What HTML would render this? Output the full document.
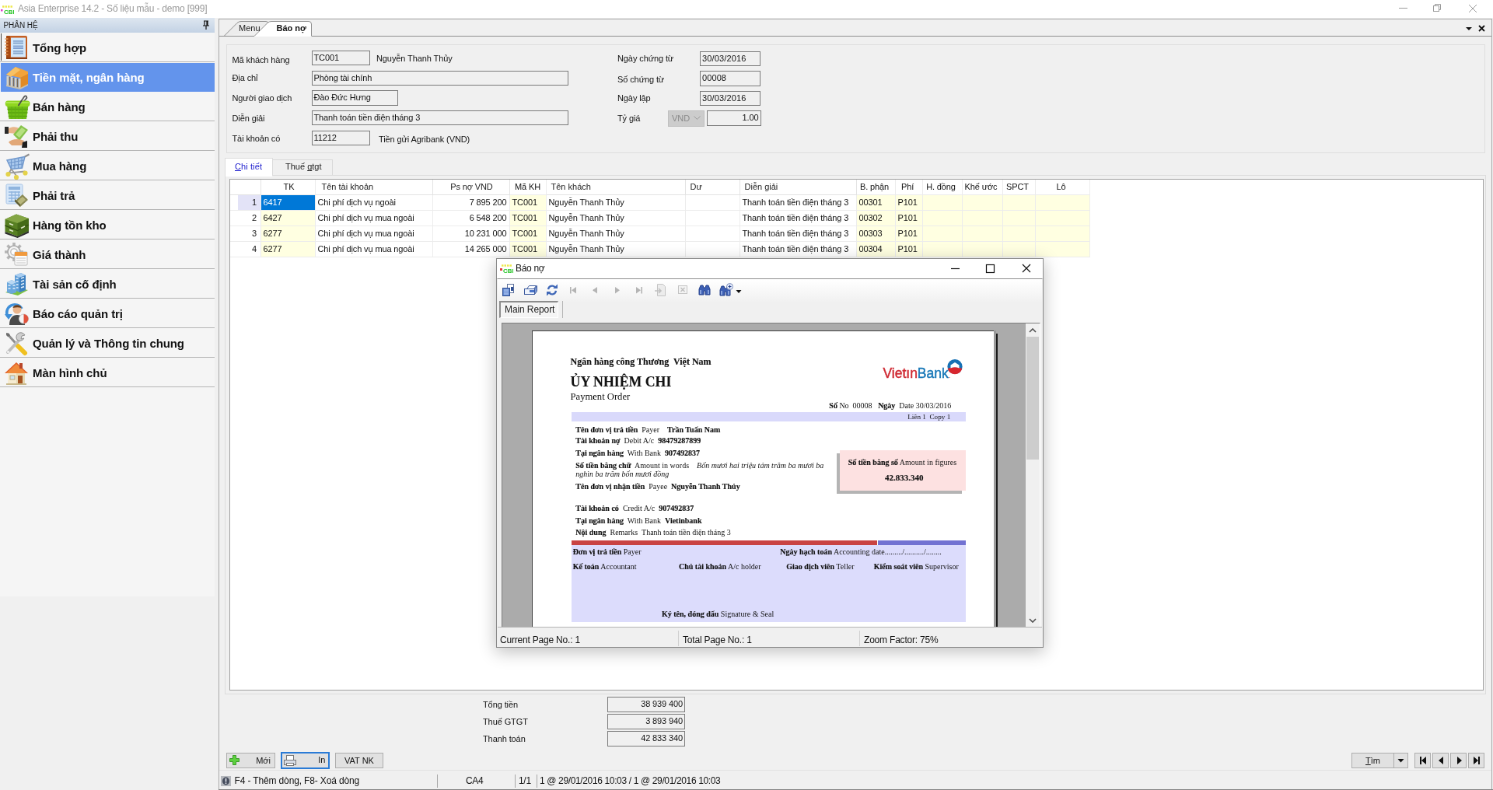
<!DOCTYPE html>
<html lang="vi">
<head>
<meta charset="utf-8">
<title>Asia Enterprise 14.2 - Số liệu mẫu - demo [999]</title>
<style>
html,body{margin:0;padding:0;background:#f0f0f0;overflow:hidden;}
body{width:1493px;height:790px;position:relative;font-family:"Liberation Sans",sans-serif;}
#root{position:absolute;left:0;top:0;width:1920px;height:1016px;transform:scale(0.777604);transform-origin:0 0;will-change:transform;background:#f0f0f0;font-size:11px;color:#000;overflow:hidden;}
#root *{box-sizing:border-box;}
.abs{position:absolute;}
u{text-decoration-skip-ink:none;}
.t{position:absolute;white-space:nowrap;}
/* ---------- title bar ---------- */
#titlebar{position:absolute;left:0;top:0;width:1920px;height:23px;background:#fff;}
#titlebar .ttl{position:absolute;left:23px;top:0;line-height:23.500px;font-size:12px;color:#999;white-space:nowrap;letter-spacing:-0.2px;}
/* ---------- sidebar ---------- */
#side{position:absolute;left:0;top:23px;width:276px;height:993px;background:#f0f0f0;}
#sidehead{position:absolute;left:0;top:0;width:276px;height:19px;background:linear-gradient(#dde6f0,#c3d2e4);}
#sidehead span{position:absolute;left:4.500px;top:0;line-height:19px;font-size:10px;color:#1e1e1e;letter-spacing:-0.05px;}
#sidelist{position:absolute;left:0;top:19px;width:276px;height:725px;background:#f5f5f5;}
.mi{position:absolute;left:0;width:276px;height:38px;border-bottom:1px solid #b4b4b4;background:#f5f5f5;}
.mi span{position:absolute;left:42px;top:0;line-height:40px;font-size:15px;letter-spacing:-0.1px;font-weight:bold;color:#111;white-space:nowrap;}
.mi.sel{background:#6394ec;border-bottom:none;left:1px;width:275px;height:36.500px;margin-top:1px;}
.mi.sel span{line-height:38px;}
.mi.sel svg{top:2px;}
.mi.sel span{color:#fff;left:41px;}
.mi svg{position:absolute;left:4.500px;top:3px;width:32px;height:32px;overflow:visible;}

/* ---------- main panel ---------- */
#main{position:absolute;left:281px;top:24px;width:1638px;height:992px;border:1px solid #a9a9a9;border-bottom:none;background:#f0f0f0;}
#tabline{position:absolute;left:0;top:21px;width:1634px;height:1px;background:#8e8e8e;}
.lbl{position:absolute;white-space:nowrap;font-size:11px;line-height:20px;color:#111;letter-spacing:-0.1px;}
.inp{position:absolute;height:19.500px;border:1px solid #7a7a7a;background:#f0f0f0;font-size:11px;line-height:17.500px;letter-spacing:-0.12px;padding:0 2px;white-space:nowrap;color:#111;overflow:hidden;}
.inp.r{text-align:right;}
#gbox{position:absolute;left:8.500px;top:32px;width:1619px;height:139.500px;border:1px solid #dedede;}
/* grid */
#grid{position:absolute;left:12.500px;top:204.500px;width:1613px;height:658.500px;background:#fff;border:1px solid #a0a0a0;}
#grid .h{position:absolute;top:0;height:20px;line-height:18px;font-size:11px;color:#222;background:#fff;border-right:1px solid #e3e3e3;border-bottom:1px solid #e3e3e3;white-space:nowrap;padding-left:6px;}
#grid .h.c{text-align:center;padding-left:0;}
#grid .c{position:absolute;height:20px;line-height:19px;font-size:11px;letter-spacing:-0.12px;color:#111;white-space:nowrap;padding:0 3px;border-right:1px solid #ececec;border-bottom:1px solid #ececec;overflow:hidden;}
#grid .y{background:#ffffe1;}
#grid .n{text-align:right;}
#grid .c.n:first-child,#grid .rn{padding-right:4.500px;}
.btn{position:absolute;height:20px;border:1px solid #adadad;background:#e1e1e1;font-size:11px;line-height:18px;text-align:center;color:#111;white-space:nowrap;}
#status{position:absolute;left:282px;top:990px;width:1636px;height:24px;background:#f0f0f0;border-top:1px solid #e2e2e2;font-size:12px;}
#status .t{line-height:27.500px;top:0;color:#111;}
#status .sep{position:absolute;top:5px;width:1px;height:17px;background:#a8a8a8;}

/* ---------- dialog ---------- */
#dlg{position:absolute;left:638px;top:332px;width:704px;height:500.500px;background:#fff;border:1px solid #8a8a8a;box-shadow:0 5px 20px 1px rgba(0,0,0,0.24);}
#dlg .cap{position:absolute;left:24px;top:0;line-height:25px;font-size:12px;color:#111;white-space:nowrap;letter-spacing:-0.3px;}
#dcl{position:absolute;left:0;top:25px;width:702px;height:473.500px;background:#f0f0f0;border:1px solid transparent;border-top-color:#8f8f8f;overflow:hidden;}
#dtool{position:absolute;left:0;top:0;width:700px;height:30px;background:linear-gradient(#ffffff,#f0f0f0);}
#dtab{position:absolute;left:2px;top:27.500px;width:76px;height:22px;letter-spacing:-0.1px;border-top:2px solid #8c8c8c;border-left:2px solid #8c8c8c;border-right:1px solid #fff;border-bottom:1px solid #fff;background:#f4f4f4;font-size:12px;line-height:19px;color:#222;padding-left:5px;white-space:nowrap;}
#dview{position:absolute;left:5px;top:56px;width:674px;height:391px;background:#ababab;border-top:1px solid #7e7e7e;border-left:1px solid #7e7e7e;overflow:hidden;}
#pgap{position:absolute;left:632.300px;top:9px;width:2.300px;height:842px;background:#9a9a9a;}
#pshadow{position:absolute;left:634.600px;top:12.700px;width:2.900px;height:842px;background:#1a1a1a;}
#page{position:absolute;left:38.300px;color:#000;top:9px;width:594px;height:842px;background:#fff;border-left:1px solid #3d3d3d;border-top:1px solid #3d3d3d;font-family:"Liberation Serif",serif;font-size:10px;color:#111;}
#page .t{line-height:12px;}
#page b{font-weight:bold;-webkit-text-stroke:0.15px #111;}
#dscroll{position:absolute;left:679px;top:56px;width:19px;height:391px;background:#f0f0f0;border-top:1px solid #7e7e7e;border-right:1px solid #fff;}
#dstat{position:absolute;left:0;top:447px;width:700px;height:25.500px;border-top:1px solid #b4b4b4;background:#f0f0f0;font-size:12px;color:#111;}
#dstat .t{top:3.500px;line-height:25px;letter-spacing:-0.2px;}
#dstat .sep{position:absolute;top:4px;width:1px;height:20px;background:#d0d0d0;}
</style>
</head>
<body>
<div id="root">

<!-- ================= TITLE BAR ================= -->
<div id="titlebar">
  <svg class="abs" style="left:-0.500px;top:4.500px" width="18" height="16" viewBox="0 0 18 16"><path d="M3 3.500h13" stroke="#efe94f" stroke-width="2.500" stroke-dasharray="2.500 1"/><rect x="1" y="7" width="2.500" height="2.500" fill="#e23ad0"/><text x="5" y="13" font-family="Liberation Sans, sans-serif" font-size="8" font-weight="bold" fill="#22c322">CBF</text></svg>
  <div class="ttl">Asia Enterprise 14.2 - Số liệu mẫu - demo [999]</div>
  <svg class="abs" style="left:1780px;top:0" width="140" height="23" viewBox="0 0 140 23"><g stroke="#9a9a9a" stroke-width="1" fill="none"><path d="M19 10.500h11"/><rect x="63.500" y="7.500" width="7" height="7"/><path d="M65.500 7.500v-2h7v7h-2"/><path d="M109 6l10 10M119 6l-10 10"/></g></svg>
</div>

<!-- ================= SIDEBAR ================= -->
<div id="side">
  <div id="sidehead"><span>PHÂN HỆ</span>
    <svg class="abs" style="left:260px;top:3px" width="10" height="13" viewBox="0 0 10 13"><path d="M2 1h6M3 1v6M7 1v6M6 1v6M1 7h8M5 7v5" stroke="#111" stroke-width="1.200" fill="none"/></svg>
  </div>
  <div id="sidelist">
    <div class="mi" style="top:0"><div class="abs" style="left:1px;top:1px;width:1px;height:35px;background:#444"></div><svg viewBox="0 0 32 32"><rect x="3" y="1" width="27" height="30" rx="2" fill="#c55f22"/><rect x="3" y="1" width="5" height="30" rx="1" fill="#a94a12"/><rect x="9" y="3.500" width="19" height="25" fill="#d3e9fb"/><rect x="12" y="7" width="13" height="4.500" fill="#86a6cc"/><rect x="12" y="13.500" width="13" height="4.500" fill="#7f9fd0"/><rect x="12" y="20" width="13" height="4.500" fill="#86a6cc"/><path d="M12 9.200h13M12 15.700h13M12 22.200h13" stroke="#c4dcf4" stroke-width="1"/><path d="M1.500 5h4M1.500 9h4M1.500 13h4M1.500 17h4M1.500 21h4M1.500 25h4" stroke="#e09456" stroke-width="1.400"/><rect x="3" y="29" width="27" height="2" fill="#8a3f16"/></svg><span>Tổng hợp</span></div>
    <div class="mi sel" style="top:38px"><svg viewBox="0 0 32 32"><path d="M2 13 L14 3 L30 9 L30 13 L20 17 L2 13Z" fill="#f2a33a"/><path d="M2 13 L14 3 L20 7 L8 16Z" fill="#f7c165"/><path d="M20 17 L30 12 L30 26 L20 31Z" fill="#e08a24"/><path d="M4 15v13M9 16v13M14 17v13M19 18v13" stroke="#d9d3c3" stroke-width="3"/><path d="M6.500 16v12M11.500 17v12M16.500 18v12" stroke="#7a6a55" stroke-width="1.600"/><path d="M2 28l18 4 10-5v-2l-10 5-18-4z" fill="#c9c2ae"/></svg><span>Tiền mặt, ngân hàng</span></div>
    <div class="mi" style="top:76px"><svg viewBox="0 0 32 32"><path d="M18.500 15 L26 3.500 Q27.500 1.500 29 3 Q30 4.500 28.500 6 L21 15" stroke="#5a5a5a" stroke-width="1.800" fill="none"/><path d="M4 14 h27.500 l-2.500 18 h-22.500z" fill="#6fbd17"/><rect x="1.800" y="8.500" width="31.700" height="7.500" rx="3.500" fill="#8fd620"/><path d="M3 11h29" stroke="#b4ea5a" stroke-width="1.600"/><path d="M4.500 19.500h26.500M5 24h25.500M5.800 28.500h24" stroke="#5aa30f" stroke-width="1.500"/><path d="M10 16v16M14.500 16v16M19 16v16M23.500 16v16" stroke="#62ad12" stroke-width="1"/><path d="M18.500 15 L23 8" stroke="#4a4a4a" stroke-width="1.800" fill="none"/></svg><span>Bán hàng</span></div>
    <div class="mi" style="top:114px"><svg viewBox="0 0 32 32"><path d="M1 4h5v9h-5z" fill="#2a2a2a"/><path d="M6 6c6-3 11-2 15 1l-4 6-11-1z" fill="#e8b58a"/><path d="M12 14 L22 2 L31 8 L20 22Z" fill="#86c24a"/><path d="M15 14 L23 5 L28 8.500 L20 18Z" fill="#b5e080"/><path d="M6 24c4-5 14-5 20-2l-3 6H10z" fill="#e2a878"/><path d="M24 24l6-2v9h-7z" fill="#1f1f1f"/></svg><span>Phải thu</span></div>
    <div class="mi" style="top:152px"><svg viewBox="0 0 32 32"><path d="M4 9 L27 4.500 L23.500 19 L9.500 20.500Z" fill="#a9c8ec" stroke="#6f97cc" stroke-width="1.400"/><path d="M5.500 12.700l20.500-3.700M7 16.500l18-2.800M9.500 8v12.500M14 7.200v13M18.500 6.300v13.200M23 5.400v13.800" stroke="#6f97cc" stroke-width="1.100" fill="none"/><path d="M27 4.500 L32.500 1.500" stroke="#8d8d8d" stroke-width="2" fill="none"/><path d="M9.500 20.500 L6.500 25.500 L27 23.500 M9.500 20.500 L16 29" stroke="#9a9a9a" stroke-width="1.800" fill="none"/><circle cx="5.500" cy="27" r="3.100" fill="#e4d24a"/><circle cx="16" cy="31" r="3.100" fill="#e4d24a"/><circle cx="27.500" cy="25.500" r="3.100" fill="#e4d24a"/></svg><span>Mua hàng</span></div>
    <div class="mi" style="top:190px"><svg viewBox="0 0 32 32"><rect x="3" y="2" width="21" height="25" rx="1.500" fill="#d5e6f8" stroke="#a9c4e4"/><rect x="6" y="5" width="15" height="4" fill="#8fb4de"/><path d="M6 12h15M6 16h15M6 20h15M6 24h15M10 11v14M14.500 11v14M19 11v14" stroke="#8fb4de" stroke-width="1.300"/><path d="M14 24 L24 15 L31 22 L21 31Z" fill="#8b8a55"/><path d="M17 24 L24 18 L28 22 L21 28Z" fill="#b9b77d"/><path d="M14 24l7 7v-3l-7-7z" fill="#5e5d36"/></svg><span>Phải trả</span></div>
    <div class="mi" style="top:228px"><svg viewBox="0 0 32 32"><path d="M1.500 9 L16 2.500 L32 8 L32 24 L17.500 31 L1.500 25Z" fill="#577f22"/><path d="M1.500 9 L16 2.500 L32 8 L17.500 14Z" fill="#83a544"/><path d="M17.500 14 L32 8 L32 24 L17.500 31Z" fill="#456a18"/><path d="M1.500 17l16 6.500 14.500-7.500" stroke="#34520f" stroke-width="1.400" fill="none"/><path d="M7 14.500l5 2M7 22.500l5 2M22 20.500l5-2.500" stroke="#dfe8c8" stroke-width="1.800"/><path d="M1.500 25l16 6 14.500-7v2.500l-14.500 6.500-16-5.500z" fill="#2c2c2c"/></svg><span>Hàng tồn kho</span></div>
    <div class="mi" style="top:266px"><svg viewBox="0 0 32 32"><path d="M13 1v5M13 20v5M1 13h5M20 13h5M4.500 4.500l3.500 3.500M18 18l3.500 3.500M21.500 4.500L18 8M8 18l-3.500 3.500" stroke="#b5b5b5" stroke-width="3.600"/><circle cx="13" cy="13" r="8" fill="#f4f4f4" stroke="#a9a9a9" stroke-width="1.600"/><circle cx="13" cy="13" r="4.200" fill="#fdfdfd" stroke="#b9b9b9" stroke-width="1.300"/><rect x="14" y="13" width="16" height="17" rx="1" fill="#fdfdfd" stroke="#b9b9b9"/><rect x="14" y="13" width="16" height="5" fill="#f09a3e"/><path d="M16 21h12M16 24h12M16 27h12" stroke="#c4c4c4" stroke-width="1.200"/></svg><span>Giá thành</span></div>
    <div class="mi" style="top:304px"><svg viewBox="0 0 32 32"><path d="M2 27 L18 31 L31 24 L16 21Z" fill="#7cc142"/><path d="M14 5 L22 2 L28 5 L28 24 L20 27 L14 24Z" fill="#5b9bd5"/><path d="M14 5 L22 2 L28 5 L20 8Z" fill="#a8cdf0"/><path d="M20 8v19l8-3V5z" fill="#3b7fc0"/><path d="M15.500 9h3M15.500 13h3M15.500 17h3M15.500 21h3M22 9l4-1.500M22 13l4-1.500M22 17l4-1.500M22 21l4-1.500" stroke="#e3f0fb" stroke-width="1.600"/><path d="M4 14 L10 11 L16 14 L16 27 L10 29 L4 27Z" fill="#6aa7dc"/><path d="M4 14l6-3 6 3-6 3z" fill="#b9d8f3"/><path d="M5.500 18h3M5.500 22h3M11.500 18h3M11.500 22h3" stroke="#e3f0fb" stroke-width="1.600"/></svg><span>Tài sản cố định</span></div>
    <div class="mi" style="top:342px"><svg viewBox="0 0 32 32"><path d="M5 20 A10 10 0 1 1 23 10" stroke="#3f8fd8" stroke-width="3.500" fill="none"/><path d="M1 17l5 7 5-7z" fill="#3f8fd8"/><circle cx="17" cy="11" r="5.500" fill="#e9b48c"/><path d="M11.500 9c1-5 10-5 11 0c-3-1-7-1-11 0z" fill="#6a3d1c"/><path d="M7 31c0-9 4-13 10-13s10 4 10 13z" fill="#4a4a4a"/><circle cx="25.500" cy="23" r="6" fill="#f4f4f4" stroke="#c9c9c9"/><path d="M25.500 23V17a6 6 0 0 1 0 12z" fill="#e0523c"/></svg><span>Báo cáo quản trị</span></div>
    <div class="mi" style="top:380px"><svg viewBox="0 0 32 32"><path d="M4 4 L22 24" stroke="#8d8d8d" stroke-width="3"/><path d="M3 3l4 1 1 3-3 1-2-2z" fill="#6f6f6f"/><path d="M18 20 L27 29" stroke="#f0c020" stroke-width="6" stroke-linecap="round"/><path d="M5 28 L20 12" stroke="#bdbdbd" stroke-width="4" stroke-linecap="round"/><path d="M18 4a6 6 0 0 1 9 2l-4 1-1 4 4-1a6 6 0 0 1-9 2a6 6 0 0 1 1-8z" fill="#cfcfcf" stroke="#8f8f8f"/><circle cx="5.500" cy="27.500" r="1.600" fill="#f4f4f4"/></svg><span>Quản lý và Thông tin chung</span></div>
    <div class="mi" style="top:418px"><svg viewBox="0 0 32 32"><path d="M1 17 L16 3 L31 17 L27 17 L16 8 L5 17Z" fill="#e0602a"/><path d="M3 17 L16 5 L29 17Z" fill="#f08a3a"/><rect x="20" y="4" width="4" height="7" fill="#b9472a"/><path d="M5 17h22v13H5z" fill="#f6ecd2"/><path d="M16 17h11v13H16z" fill="#e6d8b2"/><rect x="18" y="20" width="6" height="10" fill="#a5521f"/><rect x="8" y="20" width="6" height="5" fill="#cfe4f2" stroke="#b9a77a"/><path d="M3 30h26v2H3z" fill="#c9b98c"/></svg><span>Màn hình chủ</span></div>
  </div>
</div>

<!-- MAIN -->
<div id="main">
  <!-- top tabs -->
  <svg class="abs" style="left:0;top:0" width="130" height="23" viewBox="0 0 130 23">
    <path d="M6 21.500 L23 4.500 Q25 2.500 28 2.500 L60 2.500 Q63 2.500 63 5.500 L63 12" fill="#ececec" stroke="#8e8e8e" stroke-width="1"/>
    <path d="M45 21.500 L62 4.500 Q64 2.500 67 2.500 L115 2.500 Q118.500 2.500 118.500 6 L118.500 22 L45 22 Z" fill="#fff" stroke="none"/>
    <path d="M45 21.500 L62 4.500 Q64 2.500 67 2.500 L115 2.500 Q118.500 2.500 118.500 6 L118.500 21.500" fill="none" stroke="#8e8e8e" stroke-width="1"/>
  </svg>
  <div class="abs" style="left:0;top:21px;width:45px;height:1px;background:#8e8e8e"></div>
  <div class="abs" style="left:118.500px;top:21px;width:1517px;height:1px;background:#8e8e8e"></div>
  <div class="t" style="left:25px;top:2px;line-height:18px;font-size:11px;color:#222">Menu</div>
  <div class="t" style="left:73.500px;top:2px;line-height:18px;font-size:11px;font-weight:bold;color:#111">Báo nợ</div>
  <svg class="abs" style="left:1601px;top:5px" width="32" height="14" viewBox="0 0 32 14"><path d="M2 5h8l-4 4z" fill="#111"/><path d="M19 3l7 7M26 3l-7 7" stroke="#111" stroke-width="1.800" fill="none"/></svg>

  <!-- group box with header fields -->
  <div id="gbox"></div>
  <div class="lbl" style="left:16.500px;top:41.900px">Mã khách hàng</div>
  <div class="lbl" style="left:16.500px;top:65.100px">Địa chỉ</div>
  <div class="lbl" style="left:16.500px;top:90.900px">Người giao dịch</div>
  <div class="lbl" style="left:16.500px;top:116.700px">Diễn giải</div>
  <div class="lbl" style="left:16.500px;top:143.100px">Tài khoản có</div>
  <div class="inp" style="left:118.500px;top:39.500px;width:75px">TC001</div>
  <div class="lbl" style="left:202px;top:40px">Nguyễn Thanh Thủy</div>
  <div class="inp" style="left:118.500px;top:65.500px;width:330px">Phòng tài chính</div>
  <div class="inp" style="left:118.500px;top:91.200px;width:111px">Đào Đức Hưng</div>
  <div class="inp" style="left:118.500px;top:116.700px;width:330px">Thanh toán tiền điện tháng 3</div>
  <div class="inp" style="left:118.500px;top:142.700px;width:75px">11212</div>
  <div class="lbl" style="left:205px;top:144px">Tiền gửi Agribank (VND)</div>

  <div class="lbl" style="left:512px;top:40.100px">Ngày chứng từ</div>
  <div class="lbl" style="left:512px;top:66.600px">Số chứng từ</div>
  <div class="lbl" style="left:512px;top:90.800px">Ngày lập</div>
  <div class="lbl" style="left:512px;top:116.600px">Tỷ giá</div>
  <div class="inp" style="left:618px;top:40.500px;width:78px;letter-spacing:0.15px">30/03/2016</div>
  <div class="inp" style="left:618px;top:66.300px;width:78px;letter-spacing:0.1px">00008</div>
  <div class="inp" style="left:618px;top:91.500px;width:78px;letter-spacing:0.15px">30/03/2016</div>
  <div class="abs" style="left:577px;top:117px;width:47px;height:21px;background:#cccccc;border:1px solid #bfbfbf;font-size:11px;line-height:19px;color:#8a8a8a;padding-left:4px">VND
    <svg class="abs" style="left:32px;top:6px" width="9" height="6" viewBox="0 0 9 6"><path d="M0.500 0.500l4 4 4-4" stroke="#9a9a9a" fill="none"/></svg></div>
  <div class="inp r" style="left:627px;top:117px;width:69.500px">1.00</div>

  <!-- sub tabs -->
  <div class="abs" style="left:7px;top:178px;width:62px;height:23px;background:#fff;border:1px solid #dcdcdc;border-bottom:none"></div>
  <div class="abs" style="left:69px;top:180px;width:77px;height:21px;background:#f0f0f0;border:1px solid #d9d9d9;border-left:none;border-bottom:none"></div>
  <div class="t" style="left:20px;top:180px;line-height:18px;font-size:11px;color:#1a1acd;letter-spacing:0.1px"><u>C</u>hi tiết</div>
  <div class="t" style="left:85px;top:180px;line-height:18px;font-size:11px;color:#222">Thuế <u>g</u>tgt</div>
  <div class="abs" style="left:6.500px;top:200px;width:1622px;height:667.500px;border:1px solid #dcdcdc;background:#f0f0f0"></div>
  <div class="abs" style="left:7.500px;top:200px;width:60.500px;height:2px;background:#fff"></div>

  <!-- grid -->
  <div id="grid">
    <div class="h" style="left:0;width:40px"></div>
    <div class="h c" style="left:40px;width:70px;padding-left:6px">TK</div>
    <div class="h" style="left:110px;width:151px;padding-left:8px">Tên tài khoản</div>
    <div class="h n" style="left:261px;width:99px;text-align:right;padding-right:21px;letter-spacing:-0.15px">Ps nợ VND</div>
    <div class="h c" style="left:360px;width:47px;padding-left:3px">Mã KH</div>
    <div class="h" style="left:407px;width:179px">Tên khách</div>
    <div class="h" style="left:586px;width:70px">Dư</div>
    <div class="h" style="left:656px;width:150px">Diễn giải</div>
    <div class="h c" style="left:806px;width:50px">B. phận</div>
    <div class="h c" style="left:856px;width:35px">Phí</div>
    <div class="h c" style="left:891px;width:51px">H. đồng</div>
    <div class="h c" style="left:942px;width:52px">Khế ước</div>
    <div class="h c" style="left:994px;width:42px">SPCT</div>
    <div class="h c" style="left:1036px;width:70px">Lô</div>
    <div class="c n rn" style="left:0;top:20px;width:40px;background:linear-gradient(90deg,#fff 0,#fff 10px,#e3e3f7 10px);">1</div>
    <div class="c" style="left:40px;top:20px;width:70px;background:#0078d7;color:#fff">6417</div>
    <div class="c" style="left:110px;top:20px;width:151px;padding-left:3px">Chi phí dịch vụ ngoài</div>
    <div class="c n" style="left:261px;top:20px;width:99px">7 895 200</div>
    <div class="c y" style="left:360px;top:20px;width:47px">TC001</div>
    <div class="c" style="left:407px;top:20px;width:179px">Nguyễn Thanh Thủy</div>
    <div class="c" style="left:586px;top:20px;width:70px"></div>
    <div class="c" style="left:656px;top:20px;width:150px">Thanh toán tiền điện tháng 3</div>
    <div class="c y" style="left:806px;top:20px;width:50px">00301</div>
    <div class="c y" style="left:856px;top:20px;width:35px">P101</div>
    <div class="c y" style="left:891px;top:20px;width:51px"></div>
    <div class="c y" style="left:942px;top:20px;width:52px"></div>
    <div class="c y" style="left:994px;top:20px;width:42px"></div>
    <div class="c y" style="left:1036px;top:20px;width:70px"></div>
    <div class="c n rn" style="left:0;top:40px;width:40px;">2</div>
    <div class="c y" style="left:40px;top:40px;width:70px">6427</div>
    <div class="c" style="left:110px;top:40px;width:151px;padding-left:3px">Chi phí dịch vụ mua ngoài</div>
    <div class="c n" style="left:261px;top:40px;width:99px">6 548 200</div>
    <div class="c y" style="left:360px;top:40px;width:47px">TC001</div>
    <div class="c" style="left:407px;top:40px;width:179px">Nguyễn Thanh Thủy</div>
    <div class="c" style="left:586px;top:40px;width:70px"></div>
    <div class="c" style="left:656px;top:40px;width:150px">Thanh toán tiền điện tháng 3</div>
    <div class="c y" style="left:806px;top:40px;width:50px">00302</div>
    <div class="c y" style="left:856px;top:40px;width:35px">P101</div>
    <div class="c y" style="left:891px;top:40px;width:51px"></div>
    <div class="c y" style="left:942px;top:40px;width:52px"></div>
    <div class="c y" style="left:994px;top:40px;width:42px"></div>
    <div class="c y" style="left:1036px;top:40px;width:70px"></div>
    <div class="c n rn" style="left:0;top:60px;width:40px;">3</div>
    <div class="c y" style="left:40px;top:60px;width:70px">6277</div>
    <div class="c" style="left:110px;top:60px;width:151px;padding-left:3px">Chi phí dịch vụ mua ngoài</div>
    <div class="c n" style="left:261px;top:60px;width:99px">10 231 000</div>
    <div class="c y" style="left:360px;top:60px;width:47px">TC001</div>
    <div class="c" style="left:407px;top:60px;width:179px">Nguyễn Thanh Thủy</div>
    <div class="c" style="left:586px;top:60px;width:70px"></div>
    <div class="c" style="left:656px;top:60px;width:150px">Thanh toán tiền điện tháng 3</div>
    <div class="c y" style="left:806px;top:60px;width:50px">00303</div>
    <div class="c y" style="left:856px;top:60px;width:35px">P101</div>
    <div class="c y" style="left:891px;top:60px;width:51px"></div>
    <div class="c y" style="left:942px;top:60px;width:52px"></div>
    <div class="c y" style="left:994px;top:60px;width:42px"></div>
    <div class="c y" style="left:1036px;top:60px;width:70px"></div>
    <div class="c n rn" style="left:0;top:80px;width:40px;">4</div>
    <div class="c y" style="left:40px;top:80px;width:70px">6277</div>
    <div class="c" style="left:110px;top:80px;width:151px;padding-left:3px">Chi phí dịch vụ mua ngoài</div>
    <div class="c n" style="left:261px;top:80px;width:99px">14 265 000</div>
    <div class="c y" style="left:360px;top:80px;width:47px">TC001</div>
    <div class="c" style="left:407px;top:80px;width:179px">Nguyễn Thanh Thủy</div>
    <div class="c" style="left:586px;top:80px;width:70px"></div>
    <div class="c" style="left:656px;top:80px;width:150px">Thanh toán tiền điện tháng 3</div>
    <div class="c y" style="left:806px;top:80px;width:50px">00304</div>
    <div class="c y" style="left:856px;top:80px;width:35px">P101</div>
    <div class="c y" style="left:891px;top:80px;width:51px"></div>
    <div class="c y" style="left:942px;top:80px;width:52px"></div>
    <div class="c y" style="left:994px;top:80px;width:42px"></div>
    <div class="c y" style="left:1036px;top:80px;width:70px"></div>
  </div>

  <!-- totals -->
  <div class="lbl" style="left:339px;top:871px">Tổng tiền</div>
  <div class="lbl" style="left:339px;top:893px">Thuế GTGT</div>
  <div class="lbl" style="left:339px;top:915px">Thanh toán</div>
  <div class="inp r" style="left:499px;top:871px;width:100px">38 939 400</div>
  <div class="inp r" style="left:499px;top:893px;width:100px">3 893 940</div>
  <div class="inp r" style="left:499px;top:915px;width:100px">42 833 340</div>

  <!-- buttons -->
  <div class="btn" style="left:9px;top:942.500px;width:63px;text-align:right;padding-right:5px">Mới
    <svg class="abs" style="left:2px;top:1.500px" width="15" height="15" viewBox="0 0 15 15"><path d="M5.500 1.500h4v4h4v4h-4v4h-4v-4h-4v-4h4z" fill="#5ed13f" stroke="#3a9a28" stroke-width="1"/></svg></div>
  <div class="btn" style="left:79px;top:942px;width:62.500px;height:21.500px;border:2px solid #2a7bd6;text-align:right;padding-right:3px;line-height:17.500px">In
    <svg class="abs" style="left:0.500px;top:1px" width="18" height="16" viewBox="0 0 18 16"><rect x="4.500" y="1.500" width="9" height="6" fill="#fff" stroke="#777"/><rect x="1.500" y="7.500" width="15" height="6" fill="#d8dde6" stroke="#777"/><rect x="4.500" y="11.500" width="9" height="3" fill="#fff" stroke="#777"/></svg></div>
  <div class="btn" style="left:149px;top:942.500px;width:62px">VAT NK</div>

  <div class="btn" style="left:1456px;top:943px;width:73px;text-align:left;padding-left:17px"><u>T</u>ìm
    <div class="abs" style="left:53px;top:0;width:1px;height:18px;background:#adadad"></div>
    <svg class="abs" style="left:58px;top:7px" width="9" height="5" viewBox="0 0 9 5"><path d="M0.500 0h8l-4 4.500z" fill="#111"/></svg></div>
  <div class="btn" style="left:1537px;top:943px;width:21px"><svg class="abs" style="left:5px;top:4px" width="10" height="10" viewBox="0 0 10 10"><path d="M1 0h2v10h-2zM9 0v10l-6-5z" fill="#111"/></svg></div>
  <div class="btn" style="left:1560px;top:943px;width:21px"><svg class="abs" style="left:6px;top:4px" width="8" height="10" viewBox="0 0 8 10"><path d="M7 0v10l-6-5z" fill="#111"/></svg></div>
  <div class="btn" style="left:1583px;top:943px;width:21px"><svg class="abs" style="left:7px;top:4px" width="8" height="10" viewBox="0 0 8 10"><path d="M1 0v10l6-5z" fill="#111"/></svg></div>
  <div class="btn" style="left:1606px;top:943px;width:21px"><svg class="abs" style="left:5px;top:4px" width="10" height="10" viewBox="0 0 10 10"><path d="M7 0h2v10h-2zM1 0v10l6-5z" fill="#111"/></svg></div>
</div>

<div class="abs" style="left:281px;top:1014.600px;width:1639px;height:2px;background:#7c7c7c"></div>
<!-- status bar -->
<div id="status">
  <svg class="abs" style="left:1.500px;top:7px" width="13" height="13" viewBox="0 0 13 13"><rect x="0" y="0" width="13" height="13" fill="#b4b7bc"/><ellipse cx="6.500" cy="6.500" rx="4.500" ry="5" fill="#454c5c"/><rect x="5.700" y="3" width="1.600" height="4.500" fill="#e6e8ee"/><rect x="5.700" y="8.500" width="1.600" height="1.500" fill="#e6e8ee"/></svg>
  <div class="t" style="left:19.500px;letter-spacing:-0.14px">F4 - Thêm dòng, F8- Xoá dòng</div>
  <div class="sep" style="left:280px"></div>
  <div class="t" style="left:317px;letter-spacing:-0.3px">CA4</div>
  <div class="sep" style="left:380.300px"></div>
  <div class="t" style="left:385px;letter-spacing:-0.3px">1/1</div>
  <div class="sep" style="left:407.500px"></div>
  <div class="t" style="left:412px;letter-spacing:-0.36px">1 @ 29/01/2016 10:03 / 1 @ 29/01/2016 10:03</div>
</div>

<!-- DIALOG -->
<div id="dlg">
  <svg class="abs" style="left:2.500px;top:4.500px" width="18" height="16" viewBox="0 0 18 16"><path d="M3 3.500h13" stroke="#efe94f" stroke-width="2.500" stroke-dasharray="2.500 1"/><rect x="1" y="7" width="3" height="3" fill="#e23a3a"/><text x="5" y="13" font-family="Liberation Sans, sans-serif" font-size="8" font-weight="bold" fill="#22c322">CBF</text></svg>
  <div class="cap">Báo nợ</div>
  <svg class="abs" style="left:570px;top:-1px" width="132" height="26" viewBox="0 0 132 26"><g stroke="#111" stroke-width="1.200" fill="none"><path d="M14 13.500h11"/><rect x="59.500" y="8.500" width="10" height="10"/><path d="M106 8l10 10M116 8l-10 10"/></g></svg>
  <div id="dcl">
    <div id="dtool">
      <svg class="abs" style="left:3.5px;top:4.3px" width="20" height="20" viewBox="0 0 20 20"><rect x="8.500" y="2.500" width="8" height="11" fill="#fff" stroke="#5b6f9c"/><rect x="2.500" y="7.500" width="9" height="10" fill="#5f86cf" stroke="#2f4f93"/><path d="M4 10h6M4 12.500h6M4 15h6" stroke="#cfe0ff" stroke-width="1"/><rect x="13" y="6" width="3" height="5" fill="#2f4f93"/></svg>
      <svg class="abs" style="left:32.2px;top:4.3px" width="20" height="20" viewBox="0 0 20 20"><path d="M5.500 8.500l3-4h9l-3 4z" fill="#fff" stroke="#3c5a9e"/><rect x="2.500" y="8.500" width="13" height="7" fill="#eef3fb" stroke="#3c5a9e"/><path d="M15.500 8.500l3-4v7l-3 4z" fill="#7d9bd6" stroke="#3c5a9e"/><rect x="9" y="10" width="6" height="3" fill="#4a74c9"/></svg>
      <svg class="abs" style="left:59.6px;top:4.3px" width="20" height="20" viewBox="0 0 20 20"><g transform="translate(10 10) scale(0.82) translate(-10 -10)"><path d="M4 9a6 6 0 0 1 10.500-3.500" stroke="#4068b8" stroke-width="2.800" fill="none"/><path d="M16 11a6 6 0 0 1-10.500 3.500" stroke="#4068b8" stroke-width="2.800" fill="none"/><path d="M11.500 7.500h7V1z" fill="#4068b8"/><path d="M8.500 12.500H1.500v6.500z" fill="#4068b8"/></g></svg>
      <svg class="abs" style="left:86.9px;top:4.3px" width="20" height="20" viewBox="0 0 20 20"><path d="M6 6h1.600v8.400h-1.600zM14 6v8.400l-6-4.200z" fill="#b4b4b4"/></svg>
      <svg class="abs" style="left:115.0px;top:4.3px" width="20" height="20" viewBox="0 0 20 20"><path d="M13 6v8.400l-6-4.200z" fill="#b4b4b4"/></svg>
      <svg class="abs" style="left:143.7px;top:4.3px" width="20" height="20" viewBox="0 0 20 20"><path d="M7 6v8.400l6-4.200z" fill="#b4b4b4"/></svg>
      <svg class="abs" style="left:172.1px;top:4.3px" width="20" height="20" viewBox="0 0 20 20"><path d="M12.400 6h1.600v8.400h-1.600zM6 6v8.400l6-4.200z" fill="#b4b4b4"/></svg>
      <svg class="abs" style="left:198.9px;top:4.3px" width="20" height="20" viewBox="0 0 20 20"><path d="M6.500 2.500h7l3 3v12h-10z" fill="#ececec" stroke="#c4c4c4"/><path d="M3 11h7M8 8l3 3-3 3" stroke="#c0c0c0" stroke-width="1.600" fill="none"/></svg>
      <svg class="abs" style="left:228.1px;top:4.3px" width="20" height="20" viewBox="0 0 20 20"><rect x="4.500" y="4.500" width="11" height="10" fill="#f3f3f3" stroke="#c4c4c4"/><path d="M7.500 7l5 5M12.500 7l-5 5" stroke="#bdbdbd" stroke-width="1.400"/></svg>
      <svg class="abs" style="left:255.7px;top:4.3px" width="20" height="20" viewBox="0 0 20 20"><path d="M3 16V9l2-5h3l1 3h2l1-3h3l2 5v7h-6v-5h-2v5z" fill="#3d5fb4" stroke="#24408a" stroke-width="1"/><path d="M5 10v5M15 10v5" stroke="#a9c0ef" stroke-width="1.400"/></svg>
      <svg class="abs" style="left:283.5px;top:4.3px" width="20" height="20" viewBox="0 0 20 20"><path d="M2 17V10l2-5h3l1 3h2l1-3h2l2 5v7h-5v-5h-2v5z" fill="#3d5fb4" stroke="#24408a" stroke-width="1"/><path d="M4 11v5M13 11v5" stroke="#a9c0ef" stroke-width="1.400"/><circle cx="14.500" cy="5.500" r="4" fill="#e8efff" stroke="#7c8db8"/><path d="M12.500 5.500h4M14.500 3.500v4" stroke="#24408a" stroke-width="1.200"/></svg>
      <svg class="abs" style="left:305.7px;top:13.3px" width="8" height="6" viewBox="0 0 8 6"><path d="M0.500 1h7l-3.500 4z" fill="#111"/></svg>
    </div>
    <div id="dtab">Main Report</div>
    <div class="abs" style="left:83px;top:28px;width:1px;height:22px;background:#b5b5b5"></div>
    <div id="dview">
      <div id="pgap"></div><div id="pshadow"></div>
      <div id="page">
        <div class="t" style="left:48.3px;top:33.3px;font-size:12px;line-height:12px;"><b>Ngân hàng công Thương&nbsp; Việt Nam</b></div>
        <div class="t" style="left:48.3px;top:55.4px;font-size:17.800px;line-height:18px;margin-top:1.100px"><b>ỦY NHIỆM CHI</b></div>
        <div class="t" style="left:48.3px;top:77.3px;font-size:12.600px;line-height:12.500px;margin-top:0.700px">Payment Order</div>
        <svg class="abs" style="left:446px;top:30px" width="112" height="36" viewBox="0 0 112 36">
          <text x="4.500" y="30.500" font-family="Liberation Sans, sans-serif" font-size="17.500" fill="#cf2a33" stroke="#cf2a33" stroke-width="0.450">Vietın<tspan fill="#1878b8" stroke="#1878b8">Bank</tspan><tspan fill="#cf2a33" font-size="9" stroke="none">.</tspan></text>
          <circle cx="97" cy="15.500" r="9.600" fill="#1671b5"/>
          <path d="M87.700 18 Q97 14 106.300 18 A9.600 9.600 0 0 1 87.700 18Z" fill="#d7262e"/>
          <path d="M91.500 17.500 L91.500 13.500 L97 10 L102.500 13.500 L102.500 17.500 Q97 15 91.500 17.500Z" fill="#fff"/>
        </svg>
        <div class="t" style="right:55.0px;top:90.600px;font-size:10px;line-height:10px;"><b>Số</b> No &nbsp;00008&nbsp;&nbsp; <b>Ngày</b>&nbsp; Date 30/03/2016</div>
        <div class="abs" style="left:49.300px;top:103.600px;width:507.600px;height:12.700px;background:#d9d9fb"></div>
        <div class="t" style="right:56.0px;top:105.2px;font-size:9.200px;line-height:10px;">Liên 1&nbsp; Copy 1</div>
        <div class="t" style="left:55.0px;top:121.7px;font-size:10px;line-height:10px;"><b>Tên đơn vị trả tiền</b>&nbsp; Payer &nbsp;&nbsp; <b>Trần Tuấn Nam</b></div>
        <div class="t" style="left:55.0px;top:136.3px;font-size:10px;line-height:10px;"><b>Tài khoản nợ</b>&nbsp; Debit A/c &nbsp;<b>98479287899</b></div>
        <div class="t" style="left:55.0px;top:152.3px;font-size:10px;line-height:10px;"><b>Tại ngân hàng</b>&nbsp; With Bank &nbsp;<b>907492837</b></div>
        <div class="t" style="left:55.0px;top:167.6px;font-size:10px;line-height:10px;"><b>Số tiền bằng chữ</b>&nbsp; Amount in words &nbsp;&nbsp; <i>Bốn mươi hai triệu tám trăm ba mươi ba</i></div>
        <div class="t" style="left:55.0px;top:179.2px;font-size:10px;line-height:10px;"><i>nghìn ba trăm bốn mươi đồng</i></div>
        <div class="t" style="left:55.0px;top:195.2px;font-size:10px;line-height:10px;"><b>Tên đơn vị nhận tiền</b>&nbsp; Payee &nbsp;<b>Nguyễn Thanh Thủy</b></div>
        <div class="t" style="left:55.0px;top:223.3px;font-size:10px;line-height:10px;"><b>Tài khoản có</b>&nbsp; Credit A/c &nbsp;<b>907492837</b></div>
        <div class="t" style="left:55.0px;top:239.2px;font-size:10px;line-height:10px;"><b>Tại ngân hàng</b>&nbsp; With Bank &nbsp;<b>Vietinbank</b></div>
        <div class="t" style="left:55.0px;top:253.9px;font-size:10px;line-height:10px;"><b>Nội dung</b>&nbsp; Remarks &nbsp;Thanh toán tiền điện tháng 3</div>
        <div class="abs" style="left:390.400px;top:157.400px;width:161.100px;height:51.700px;background:#b4b4b4"></div>
        <div class="abs" style="left:394.500px;top:152.600px;width:162px;height:52px;background:#fde1e1"></div>
        <div class="t" style="left:405.4px;top:163.8px;font-size:10px;line-height:10px;"><b>Số tiền bằng số</b> Amount in figures</div>
        <div class="t" style="left:452.6px;top:182.8px;font-size:11px;line-height:11px;"><b>42.833.340</b></div>
        <div class="abs" style="left:49.600px;top:269px;width:393.200px;height:5.700px;background:#c94343"></div>
        <div class="abs" style="left:444px;top:269px;width:112.800px;height:5.700px;background:#7272d2"></div>
        <div class="abs" style="left:49.600px;top:274.700px;width:507.200px;height:99.400px;background:#dcdcfc"></div>
        <div class="t" style="left:51.5px;top:279.2px;font-size:10px;line-height:10px;"><b>Đơn vị trả tiền</b> Payer</div>
        <div class="t" style="left:318.0px;top:279.2px;font-size:10px;line-height:10px;"><b>Ngày hạch toán</b> Accounting date........./........../........</div>
        <div class="t" style="left:51.5px;top:297.6px;font-size:10px;line-height:10px;"><b>Kế toán</b> Accountant</div>
        <div class="t" style="left:187.7px;top:297.6px;font-size:10px;line-height:10px;"><b>Chủ tài khoản</b> A/c holder</div>
        <div class="t" style="left:326.0px;top:297.6px;font-size:10px;line-height:10px;"><b>Giao dịch viên</b> Teller</div>
        <div class="t" style="left:438.4px;top:297.6px;font-size:10px;line-height:10px;"><b>Kiểm soát viên</b> Supervisor</div>
        <div class="t" style="left:165.7px;top:358.9px;font-size:10px;line-height:10px;"><b>Ký tên, đóng dấu</b> Signature &amp; Seal</div>
      </div>
    </div>
    <div id="dscroll">
      <svg class="abs" style="left:4px;top:6px" width="10" height="6" viewBox="0 0 10 6"><path d="M1 5l4-4 4 4" stroke="#505050" stroke-width="1.600" fill="none"/></svg>
      <div class="abs" style="left:1px;top:17px;width:16px;height:158px;background:#cdcdcd"></div>
      <svg class="abs" style="left:4px;top:379px" width="10" height="6" viewBox="0 0 10 6"><path d="M1 1l4 4 4-4" stroke="#505050" stroke-width="1.600" fill="none"/></svg>
    </div>
    <div id="dstat">
      <div class="t" style="left:3px">Current Page No.: 1</div>
      <div class="sep" style="left:232px"></div>
      <div class="t" style="left:238px">Total Page No.: 1</div>
      <div class="sep" style="left:465px"></div>
      <div class="t" style="left:471px">Zoom Factor: 75%</div>
    </div>
  </div>
</div>

</div>
</body>
</html>
